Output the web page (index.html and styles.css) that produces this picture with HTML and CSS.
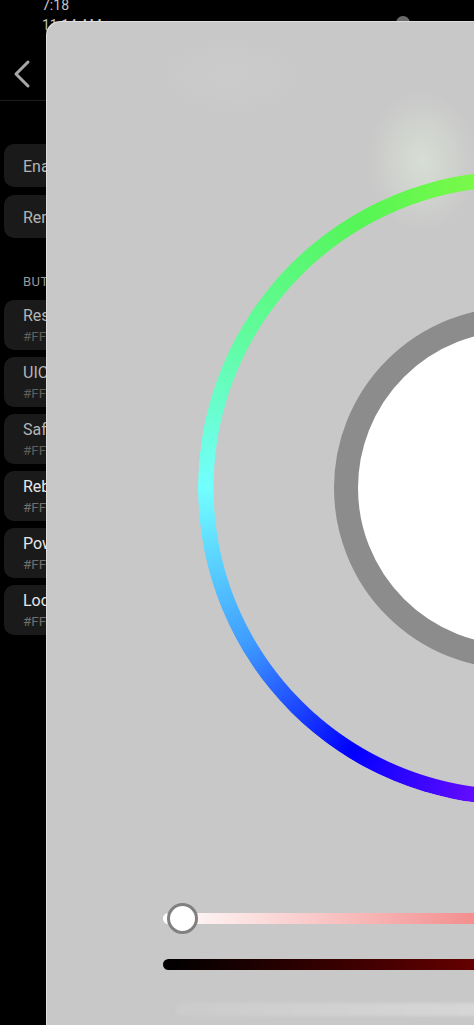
FILE: index.html
```html
<!DOCTYPE html>
<html lang="en">
<head>
<meta charset="utf-8">
<title>Colors</title>
<link rel="stylesheet" href="styles.css">
</head>
<body>
<div class="screen">
  <div class="status">
    <div class="status-line">7:18</div>
    <div class="status-line">11:14 AM</div>
    <span class="status-dot"></span>
  </div>
  <div class="appbar">
    <svg class="back" width="20" height="30" viewBox="0 0 20 30"><polyline points="16,3 4,15 16,27" fill="none" stroke="#a8a8a8" stroke-width="3" stroke-linecap="round" stroke-linejoin="round"/></svg>
  </div>
  <div class="list">
    <div class="card simple dim">Enable custom colors</div>
    <div class="card simple dim">Remove all colors</div>
    <div class="section">BUTTONS</div>
    <div class="card item dim"><div class="title">Restart</div><div class="sub">#FFFFFFFF</div></div>
    <div class="card item dim"><div class="title">UICC unlock</div><div class="sub">#FFFFFFFF</div></div>
    <div class="card item dim"><div class="title">Safe mode</div><div class="sub">#FFFFFFFF</div></div>
    <div class="card item"><div class="title">Reboot</div><div class="sub">#FFFFFFFF</div></div>
    <div class="card item"><div class="title">Power off</div><div class="sub">#FFFFFFFF</div></div>
    <div class="card item"><div class="title">Lockdown</div><div class="sub">#FFFFFFFF</div></div>
  </div>
</div>

<div class="sheet">
  <div class="wheel">
    <div class="hue-ring"></div>
    <div class="preview"></div>
  </div>
  <div class="sliders">
    <div class="slider-row">
      <div class="track track-sat"></div>
      <div class="thumb"></div>
    </div>
    <div class="track track-val"></div>
    <div class="track track-alpha"></div>
  </div>
</div>
</body>
</html>
```
FILE: styles.css
```css
html, body {
  margin: 0;
  padding: 0;
}
body {
  width: 474px;
  height: 1025px;
  overflow: hidden;
  background: #000;
  position: relative;
  font-family: Roboto, "Noto Sans", "Liberation Sans", sans-serif;
}

.screen {
  width: 474px;
}

.status {
  height: 40px;
  margin-top: -5px;
  padding-left: 42px;
  color: #c4c4c4;
  font-size: 14px;
  line-height: 20px;
  position: relative;
}
.status-dot {
  position: absolute;
  left: 396px;
  top: 21px;
  width: 14px;
  height: 14px;
  border-radius: 50%;
  background: #6a6a6a;
}

.appbar {
  height: 52px;
  padding-top: 13px;
  padding-left: 12px;
  display: flex;
  align-items: center;
  border-bottom: 1px solid #1c1c1c;
}

.list {
  padding: 43px 4px 0 4px;
}

.card {
  background: #1a1a1a;
  border-radius: 10px;
  box-sizing: border-box;
  padding-left: 19px;
  width: 466px;
}
.card.simple {
  height: 43px;
  margin-bottom: 8px;
  display: flex;
  align-items: center;
  padding-top: 1px;
  font-size: 16px;
  color: #d8d8d8;
}
.card.item {
  height: 50px;
  margin-bottom: 7px;
  padding-top: 6px;
}
.title {
  font-size: 16px;
  line-height: 19px;
  color: #e6e6e6;
}
.sub {
  margin-top: 3px;
  font-size: 13.5px;
  line-height: 16px;
  color: #6f6f6f;
}
.dim .title, .card.simple.dim {
  color: #b4b4b4;
}
.dim .sub {
  color: #5e5e5e;
}

.section {
  margin-top: 36px;
  margin-bottom: 10px;
  padding-left: 19px;
  font-size: 13px;
  line-height: 16px;
  color: #9a9a9a;
  letter-spacing: 0.5px;
}

/* Overlay sheet */
.sheet {
  position: absolute;
  left: 46px;
  top: 21px;
  width: 470px;
  height: 1004px;
  overflow: hidden;
  border-top-left-radius: 14px;
  background:
    radial-gradient(ellipse 55px 70px at 376px 140px, rgba(218, 226, 214, 0.85), rgba(218, 226, 214, 0) 100%),
    radial-gradient(ellipse 70px 35px at 185px 55px, rgba(208, 208, 208, 0.5), rgba(208, 208, 208, 0) 100%),
    #c8c8c8;
  box-shadow: inset 1px 1px 0 #dedede;
  padding-top: 150px;
  box-sizing: border-box;
}

.wheel {
  width: 634px;
  height: 634px;
  margin-left: 152px;
  display: grid;
  place-items: center;
}
.hue-ring,
.preview {
  grid-area: 1 / 1;
}
.hue-ring {
  width: 634px;
  height: 634px;
  border-radius: 50%;
  background: conic-gradient(
    #86fb44 0deg,
    #f4f64a 30deg,
    #ff9a3a 60deg,
    #ff3a3a 90deg,
    #ff3aa6 120deg,
    #f43af4 150deg,
    #7a1cff 180deg,
    #5a0aff 190deg,
    #0000ff 212deg,
    #3f9cff 240deg,
    #72ffff 270deg,
    #60fc9c 300deg,
    #55f555 330deg,
    #86fb44 360deg
  );
  -webkit-mask: radial-gradient(closest-side, transparent calc(100% - 16px), #000 calc(100% - 15px));
  mask: radial-gradient(closest-side, transparent calc(100% - 16px), #000 calc(100% - 15px));
}
.preview {
  width: 362px;
  height: 362px;
  box-sizing: border-box;
  border-radius: 50%;
  border: 24px solid #8c8c8c;
  background: #fff;
}

.sliders {
  margin-top: 98px;
  margin-left: 117px;
  width: 704px;
}
.slider-row {
  position: relative;
  height: 31px;
  display: flex;
  align-items: center;
}
.track {
  width: 704px;
  height: 11px;
  border-radius: 6px;
}
.track-sat {
  background: linear-gradient(to right, #ffffff, #e40000);
}
.thumb {
  position: absolute;
  left: 4px;
  top: 0;
  width: 31px;
  height: 31px;
  box-sizing: border-box;
  border-radius: 50%;
  border: 3px solid #808080;
  background: #fff;
}
.track-val {
  margin-top: 25px;
  background: linear-gradient(to right, #000000, #e40000);
}
.track-alpha {
  margin-top: 33px;
  margin-left: 12px;
  width: 692px;
  height: 13px;
  background: linear-gradient(to right, #cbcbcb, #dadada 60%, #e0e0e0);
  filter: blur(1.5px);
}
```
